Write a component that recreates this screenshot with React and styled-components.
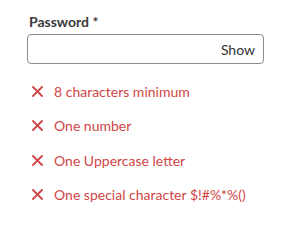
import React from 'react';
import styled, { createGlobalStyle } from 'styled-components';

const GlobalStyle = createGlobalStyle`
  html, body {
    margin: 0;
    padding: 0;
    background: #ffffff;
  }
  body {
    font-family: Lato, "Open Sans", sans-serif;
  }
`;

const Field = styled.div`
  padding: 13px 36px 0 27px;
  width: 300px;
  box-sizing: border-box;
`;

const Label = styled.label`
  display: block;
  font-size: 14px;
  line-height: 18px;
  font-weight: 700;
  color: #3a3a3a;
  margin: 0 0 3px 2px;
`;

const InputBox = styled.div`
  display: flex;
  align-items: center;
  height: 30px;
  box-sizing: border-box;
  border: 1px solid #8c8c8c;
  border-radius: 4px;
  padding: 0 8px 0 8px;
`;

const Input = styled.input`
  flex: 1;
  min-width: 0;
  border: none;
  outline: none;
  background: transparent;
  font: inherit;
  font-size: 14px;
`;

const ShowButton = styled.button`
  border: none;
  background: none;
  padding: 0;
  font-family: inherit;
  font-size: 14px;
  color: #333333;
  cursor: pointer;
`;

const Rules = styled.ul`
  list-style: none;
  margin: 17px 0 0 0;
  padding: 0 0 0 5px;
  display: flex;
  flex-direction: column;
  gap: 14.6px;
`;

const Rule = styled.li`
  display: flex;
  align-items: center;
  height: 20px;
  font-size: 14px;
  color: ${(p) => (p.met ? '#2e8540' : '#d04646')};
`;

const Icon = styled.svg`
  width: 11px;
  height: 11px;
  margin-right: 11px;
  flex: none;
`;

const rules = [
  '8 characters minimum',
  'One number',
  'One Uppercase letter',
  'One special character $!#%*%()',
];

function CrossIcon() {
  return (
    <Icon viewBox="0 0 11 11" aria-hidden="true">
      <path d="M1 1 L10 10 M10 1 L1 10" stroke="currentColor" strokeWidth="1.8" strokeLinecap="round" />
    </Icon>
  );
}

export default function App() {
  return (
    <>
      <GlobalStyle />
      <Field>
        <Label htmlFor="password">Password *</Label>
        <InputBox>
          <Input id="password" type="password" />
          <ShowButton type="button">Show</ShowButton>
        </InputBox>
        <Rules>
          {rules.map((r) => (
            <Rule key={r}>
              <CrossIcon />
              {r}
            </Rule>
          ))}
        </Rules>
      </Field>
    </>
  );
}
